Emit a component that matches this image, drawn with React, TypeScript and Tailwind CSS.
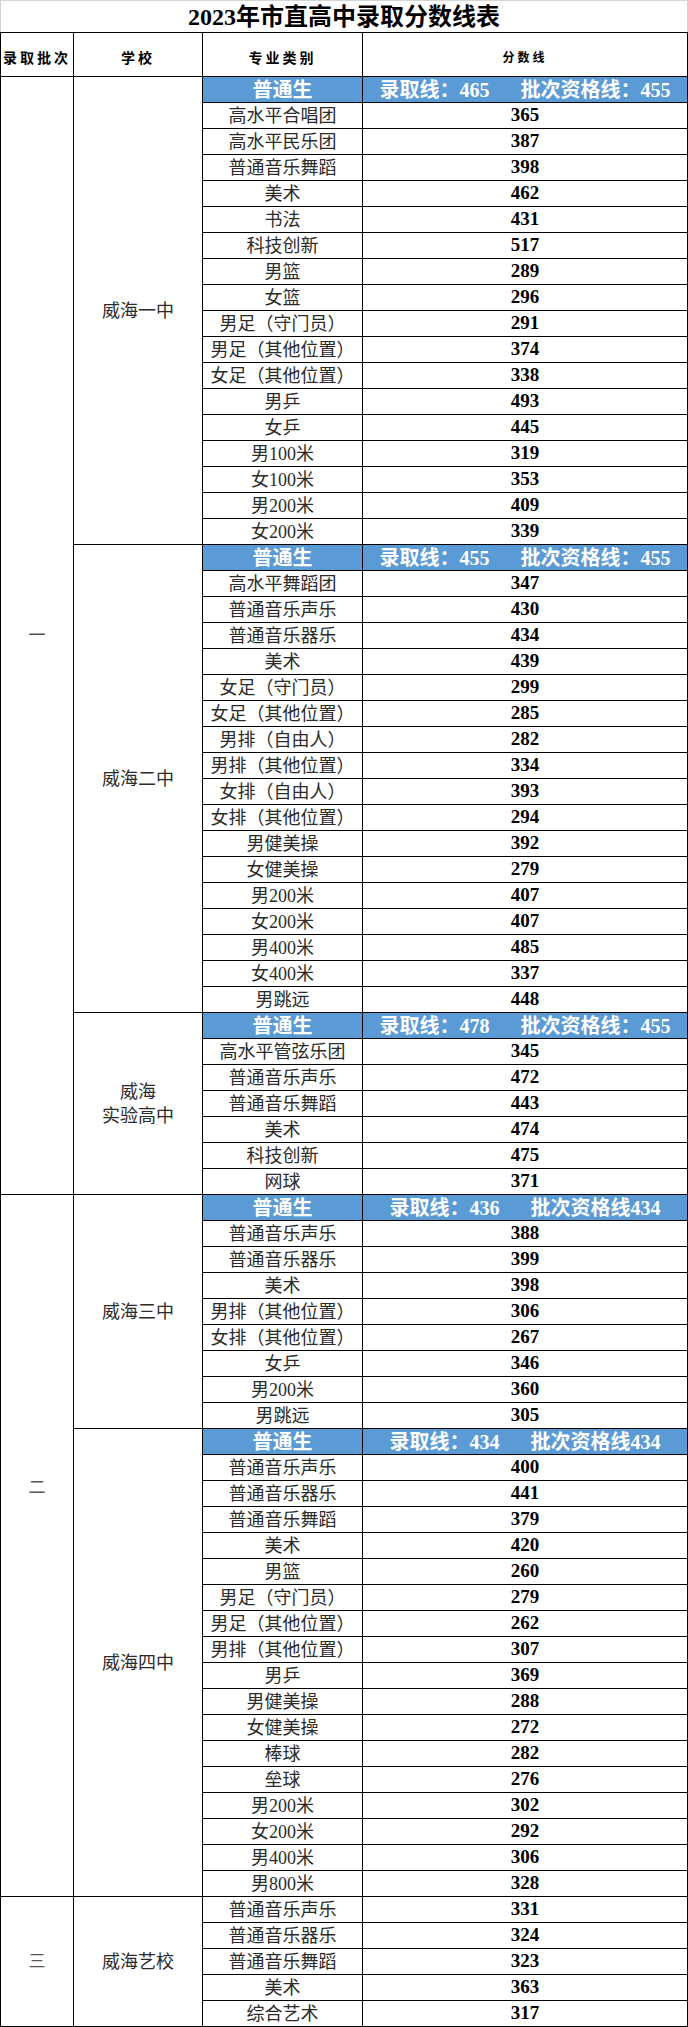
import React from "react";

type School = {
  name: string[];
  line: [string, string];
  items: [string, number][];
};

type Batch = {
  label: string;
  labelTop?: number;
  schools: School[];
};

const batches: Batch[] = [
  {
    label: "一",
    schools: [
      {
        name: ["威海一中"],
        line: ["录取线：465", "批次资格线：455"],
        items: [
          ["高水平合唱团", 365],
          ["高水平民乐团", 387],
          ["普通音乐舞蹈", 398],
          ["美术", 462],
          ["书法", 431],
          ["科技创新", 517],
          ["男篮", 289],
          ["女篮", 296],
          ["男足（守门员）", 291],
          ["男足（其他位置）", 374],
          ["女足（其他位置）", 338],
          ["男乒", 493],
          ["女乒", 445],
          ["男100米", 319],
          ["女100米", 353],
          ["男200米", 409],
          ["女200米", 339],
        ],
      },
      {
        name: ["威海二中"],
        line: ["录取线：455", "批次资格线：455"],
        items: [
          ["高水平舞蹈团", 347],
          ["普通音乐声乐", 430],
          ["普通音乐器乐", 434],
          ["美术", 439],
          ["女足（守门员）", 299],
          ["女足（其他位置）", 285],
          ["男排（自由人）", 282],
          ["男排（其他位置）", 334],
          ["女排（自由人）", 393],
          ["女排（其他位置）", 294],
          ["男健美操", 392],
          ["女健美操", 279],
          ["男200米", 407],
          ["女200米", 407],
          ["男400米", 485],
          ["女400米", 337],
          ["男跳远", 448],
        ],
      },
      {
        name: ["威海", "实验高中"],
        line: ["录取线：478", "批次资格线：455"],
        items: [
          ["高水平管弦乐团", 345],
          ["普通音乐声乐", 472],
          ["普通音乐舞蹈", 443],
          ["美术", 474],
          ["科技创新", 475],
          ["网球", 371],
        ],
      },
    ],
  },
  {
    label: "二",
    labelTop: 280,
    schools: [
      {
        name: ["威海三中"],
        line: ["录取线：436", "批次资格线434"],
        items: [
          ["普通音乐声乐", 388],
          ["普通音乐器乐", 399],
          ["美术", 398],
          ["男排（其他位置）", 306],
          ["女排（其他位置）", 267],
          ["女乒", 346],
          ["男200米", 360],
          ["男跳远", 305],
        ],
      },
      {
        name: ["威海四中"],
        line: ["录取线：434", "批次资格线434"],
        items: [
          ["普通音乐声乐", 400],
          ["普通音乐器乐", 441],
          ["普通音乐舞蹈", 379],
          ["美术", 420],
          ["男篮", 260],
          ["男足（守门员）", 279],
          ["男足（其他位置）", 262],
          ["男排（其他位置）", 307],
          ["男乒", 369],
          ["男健美操", 288],
          ["女健美操", 272],
          ["棒球", 282],
          ["垒球", 276],
          ["男200米", 302],
          ["女200米", 292],
          ["男400米", 306],
          ["男800米", 328],
        ],
      },
    ],
  },
  {
    label: "三",
    schools: [
      {
        name: ["威海艺校"],
        line: ["", ""],
        items: [
          ["普通音乐声乐", 331],
          ["普通音乐器乐", 324],
          ["普通音乐舞蹈", 323],
          ["美术", 363],
          ["综合艺术", 317],
        ],
      },
    ],
  },
];

const serif = "font-['Liberation_Serif','Noto_Sans_CJK_SC',serif]";
const sans = "font-['Noto_Sans_CJK_SC','Liberation_Sans',sans-serif]";

function SchoolBlock({ school }: { school: School }) {
  const hasLine = school.line[0] !== "";
  return (
    <div className="flex">
      <div className="flex w-[129px] shrink-0 flex-col items-center justify-center border-r border-b border-black text-[18px] leading-[24px] text-[#2b2b2b]">
        {school.name.map((n) => (
          <span key={n}>{n}</span>
        ))}
      </div>
      <div className="flex flex-1 flex-col">
        {hasLine && (
          <div className="flex h-[26px] border-b border-black bg-[#5b9bd5] text-[20px] font-bold text-white">
            <div className="flex w-[160px] shrink-0 items-center justify-center border-r border-black">
              普通生
            </div>
            <div className="flex flex-1 items-center justify-center gap-[31px]">
              <span>{school.line[0]}</span>
              <span>{school.line[1]}</span>
            </div>
          </div>
        )}
        {school.items.map(([label, score], i) => (
          <div key={i} className="flex h-[26px] border-b border-black">
            <div className="flex w-[160px] shrink-0 items-center justify-center whitespace-nowrap border-r border-black pt-px text-[18px] text-[#2b2b2b]">
              {label}
            </div>
            <div className="flex flex-1 items-center justify-center text-[19px] font-bold text-black">
              {score}
            </div>
          </div>
        ))}
      </div>
    </div>
  );
}

export default function App() {
  return (
    <div className={`w-[688px] bg-white ${serif}`}>
      <div className="flex h-[32px] items-center justify-center border-x border-t border-[#d4d4d4] pt-px text-[24px] font-bold text-black">
        2023年市直高中录取分数线表
      </div>
      <div className="border-x border-t border-black">
        <div className={`flex h-[44px] border-b border-black pt-[5px] text-[14px] font-bold tracking-[3px] text-black ${sans}`}>
          <div className="flex w-[73px] shrink-0 items-center justify-center border-r border-black -mt-[5px] pt-[5px]">
            录取批次
          </div>
          <div className="flex w-[129px] shrink-0 items-center justify-center border-r border-black -mt-[5px] pt-[5px]">
            学校
          </div>
          <div className="flex w-[160px] shrink-0 items-center justify-center border-r border-black -mt-[5px] pt-[5px]">
            专业类别
          </div>
          <div className="flex flex-1 items-center justify-center text-[12px]">分数线</div>
        </div>
        {batches.map((batch) => (
          <div key={batch.label} className="flex">
            <div
              className={`flex w-[73px] shrink-0 justify-center border-r border-b border-black text-[17px] text-[#555] ${
                batch.labelTop ? "items-start pt-[280px]" : "items-center"
              }`}
            >
              <span className="leading-[26px]">{batch.label}</span>
            </div>
            <div className="flex flex-1 flex-col">
              {batch.schools.map((s) => (
                <SchoolBlock key={s.name.join("")} school={s} />
              ))}
            </div>
          </div>
        ))}
      </div>
    </div>
  );
}
